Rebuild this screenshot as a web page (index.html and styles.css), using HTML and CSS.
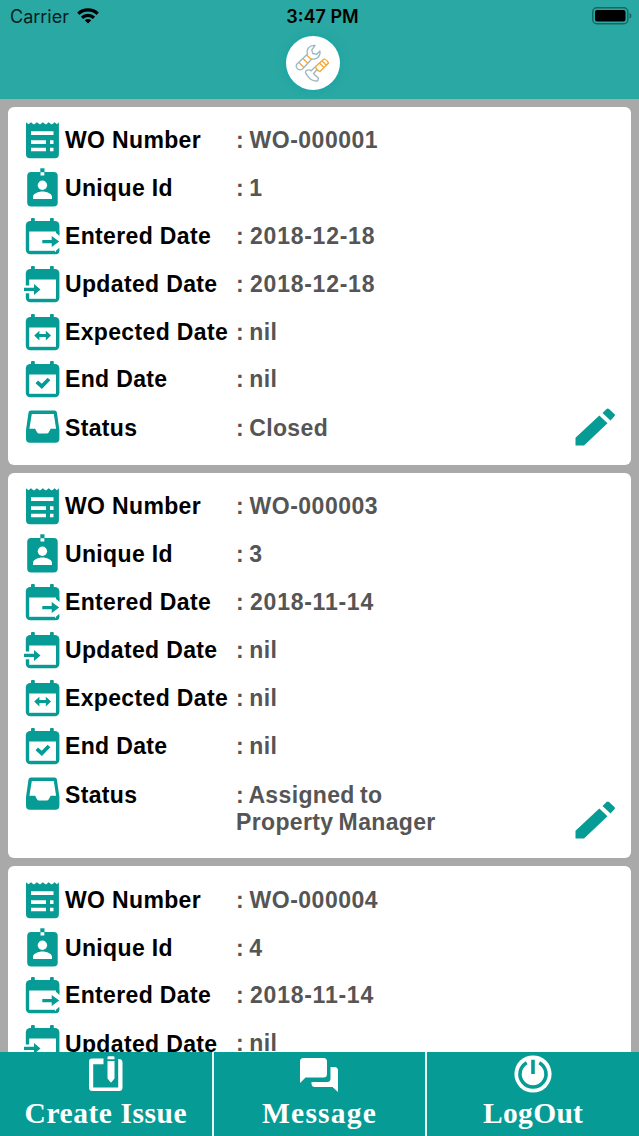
FILE: index.html
```
<!DOCTYPE html>
<html lang="en">
<head>
  <meta charset="UTF-8" />
  <meta name="viewport" content="width=device-width, initial-scale=1.0"/>
  <title>Work Orders</title>
  <link rel="stylesheet" href="styles.css">
</head>
<body>

<svg class="sprite">
  <symbol id="receipt" viewBox="0 0 36 40">
    <path d="M2 2.3l2.500 2L7 2.300l2.400 2h1l2.500-2 2.500 2h1l2.400-2 2.500 2h1l2.400-2 2.500 2h1l2.500-2 2.200 2 2-2v32q0 4-4 4H6q-4 0-4-4z"/>
    <path class="cut" d="M7 11.300h22.500V15H7zM7 20.300h15V24H7zM26 20.300h3.500V24H26zM7 27.800h15v3.500H7zM26 27.800h3.500v3.500H26z"/>
  </symbol>
  <symbol id="badge" viewBox="0 0 36 40">
    <rect x="3.2" y="4" width="30.5" height="34.5" rx="4"/>
    <path d="M16.300.3h4.200v4h-4.200z"/>
    <path class="cut" d="M16.500 4.200h3.800v3.400h-3.800zM9 31v-2.200c0-3.200 5.500-5.300 9.500-5.300s9.500 2.100 9.500 5.300V31z"/>
    <circle class="cut" cx="18.4" cy="17.3" r="4.7"/>
  </symbol>
  <symbol id="calendar" viewBox="0 0 36 40">
    <rect x="7" y="2" width="3.8" height="8" rx="1"/>
    <rect x="26" y="2" width="3.8" height="8" rx="1"/>
    <rect x="1.8" y="5" width="33.6" height="33.3" rx="4.5"/>
    <path class="cut" d="M5.200 15.500H32v19.300H5.200z"/>
  </symbol>
  <symbol id="entered" viewBox="0 0 36 40">
    <use href="#calendar"/>
    <path class="cut" d="M31 22l-2-5 2-1 5 4.500v13L31 36z"/>
    <path d="M32 15h3.300v3.300L32 15.500zM32 34.800l3.300-3v3q0 3.400-3.300 3.400zM18.300 23.900h9.400V20l7.500 5.500-7.500 5.600v-3.900h-9.400z"/>
  </symbol>
  <symbol id="updated" viewBox="0 0 36 40">
    <use href="#calendar"/>
    <path class="cut" d="M0 21.500h6v7.800H0z"/>
    <path d="M0 23.700h10V20l6.500 5.400L10 31v-3.900H0z"/>
  </symbol>
  <symbol id="expected" viewBox="0 0 36 40">
    <use href="#calendar"/>
    <path d="M10.200 23.500l5.200-4.800V22h6.400v-3.300l5.200 4.800-5.200 4.900V25h-6.400v3.400z"/>
  </symbol>
  <symbol id="ended" viewBox="0 0 36 40">
    <use href="#calendar"/>
    <path class="check" d="M12.800 22.800l5 4.500 7.200-7.300"/>
  </symbol>
  <symbol id="inbox" viewBox="0 0 36 40">
    <path d="M7 3.400h23.500q2.200 0 2.400 2l2.500 17.600v8.700q0 4-4 4H6q-4 0-4-4V23L4.500 5.400q.3-2 2.500-2z"/>
    <path class="cut" d="M7.800 7h22l2.300 14.700h-5.500q-1 2.200-2 3.800-.5 1-1.700 1h-8q-1.200 0-1.700-1-1-1.600-2-3.800H5.400z"/>
  </symbol>
  <symbol id="pencil" viewBox="0 0 40 38">
    <path d="M.5 29.700L24.300 7.400l8.200 7.800L9 37.400H.5zM27.500 4.900L31.600 1q1.200-1 2.400 0l5.400 5q1 1.200 0 2.300L35.500 12.500z"/>
  </symbol>
</svg>

<header class="header">
  <div class="status-bar">
    <div class="carrier">
      Carrier
      <svg class="wifi" viewBox="0 0 22 16">
        <path d="M1.300 5.700a14.300 14.300 0 0 1 19.400 0M5 9.700a9 9 0 0 1 12 0"/>
        <path class="wifi-dot" d="M7.700 12.200q3.300-2.500 6.600 0L11 15.500z"/>
      </svg>
    </div>
    <div class="time">3:47 PM</div>
    <svg class="battery" viewBox="0 0 40 18">
      <rect class="battery-shell" x=".8" y=".8" width="35" height="16" rx="4"/>
      <rect x="3" y="3" width="30.5" height="11.5" rx="2"/>
      <path class="battery-cap" d="M37.500 6q2 .8 2 2.800t-2 2.800z"/>
    </svg>
  </div>
  <div class="logo">
    <svg viewBox="0 0 54 54">
      <g class="steel">
        <path d="M11 28L21.500 18c-1.500-4.500 1.500-9 7.500-8.500l-3.200 4.300.9 3.700 4 .8 3.200-3.300c1 5-3 9-8.200 8L16.500 33c-3.500 2.500-8-1.500-5.500-5z"/>
        <path d="M31.500 33l-4 4.500c1.500 1.800 3 3 5 4.500l-1 3c-4.500 0-7-1-9.200-4.200L19.500 37l.5-2.500c2.500-.8 4.500-.5 5 .5l4-4"/>
      </g>
      <path class="orange" d="M13 26.500l5 5M17 22.500l5 5M20.500 19l5 4.500M29.500 30.500l8.500-7.500q3.500 1 4.500 4L34 35.500q-3.500-1-4.500-5zM33.500 27l4.500 4.500M36 24.800l4.300 4.500"/>
    </svg>
  </div>
</header>

<main class="orders">
  <section class="card">
    <div class="fields">
      <div class="row"><svg class="icon"><use href="#receipt"/></svg><span class="label">WO Number</span><span class="value code">: WO-000001</span></div>
      <div class="row"><svg class="icon"><use href="#badge"/></svg><span class="label">Unique Id</span><span class="value">: 1</span></div>
      <div class="row"><svg class="icon"><use href="#entered"/></svg><span class="label">Entered Date</span><span class="value date">: 2018-12-18</span></div>
      <div class="row"><svg class="icon"><use href="#updated"/></svg><span class="label">Updated Date</span><span class="value date">: 2018-12-18</span></div>
      <div class="row"><svg class="icon"><use href="#expected"/></svg><span class="label">Expected Date</span><span class="value">: nil</span></div>
      <div class="row"><svg class="icon"><use href="#ended"/></svg><span class="label">End Date</span><span class="value">: nil</span></div>
      <div class="row"><svg class="icon"><use href="#inbox"/></svg><span class="label">Status</span><span class="value status">: Closed</span></div>
    </div>
    <svg class="edit"><use href="#pencil"/></svg>
  </section>

  <section class="card">
    <div class="fields">
      <div class="row"><svg class="icon"><use href="#receipt"/></svg><span class="label">WO Number</span><span class="value code">: WO-000003</span></div>
      <div class="row"><svg class="icon"><use href="#badge"/></svg><span class="label">Unique Id</span><span class="value">: 3</span></div>
      <div class="row"><svg class="icon"><use href="#entered"/></svg><span class="label">Entered Date</span><span class="value date">: 2018-11-14</span></div>
      <div class="row"><svg class="icon"><use href="#updated"/></svg><span class="label">Updated Date</span><span class="value">: nil</span></div>
      <div class="row"><svg class="icon"><use href="#expected"/></svg><span class="label">Expected Date</span><span class="value">: nil</span></div>
      <div class="row"><svg class="icon"><use href="#ended"/></svg><span class="label">End Date</span><span class="value">: nil</span></div>
      <div class="row"><svg class="icon"><use href="#inbox"/></svg><span class="label">Status</span><span class="value status">: Assigned to<br>Property&nbsp;Manager</span></div>
    </div>
    <svg class="edit"><use href="#pencil"/></svg>
  </section>

  <section class="card">
    <div class="fields">
      <div class="row"><svg class="icon"><use href="#receipt"/></svg><span class="label">WO Number</span><span class="value code">: WO-000004</span></div>
      <div class="row"><svg class="icon"><use href="#badge"/></svg><span class="label">Unique Id</span><span class="value">: 4</span></div>
      <div class="row"><svg class="icon"><use href="#entered"/></svg><span class="label">Entered Date</span><span class="value date">: 2018-11-14</span></div>
      <div class="row"><svg class="icon"><use href="#updated"/></svg><span class="label">Updated Date</span><span class="value">: nil</span></div>
    </div>
  </section>
</main>

<nav class="tabs">
  <a class="tab">
    <svg class="tab-icon" viewBox="0 0 38 38">
      <path d="M5 3.500h11.500v5.700H6.200v23.300h25V4H32q3.500 0 3.500 3.500v25Q35.500 36 32 36H5.500Q2 36 2 32.500v-26q0-3 3-3z"/>
      <path d="M21.500 1.300h5q1 0 1 1v2h-7v-2q0-1 1-1zM20.500 6h7v17.500L24 27.700l-3.500-4.200z"/>
    </svg>
    <span class="create">Create Issue</span>
  </a>
  <a class="tab">
    <svg class="tab-icon message-icon" viewBox="0 0 38 38">
      <path d="M3.500 3h20Q27 3 27 6.500V19q0 3.500-3.500 3.500h-18L0 28V6.500Q0 3 3.500 3z"/>
      <path d="M30.500 12h4q3.500 0 3.500 3.500V37l-5.500-5H15q-3.500 0-3.500-3.500V27H27q3.500 0 3.500-3.500z"/>
    </svg>
    <span class="message">Message</span>
  </a>
  <a class="tab">
    <svg class="tab-icon" viewBox="0 0 38 38">
      <circle cx="19" cy="19" r="18.6"/>
      <path class="power" d="M12.700 7.700a13 13 0 1 0 12.600 0M19 4.800V19"/>
    </svg>
    <span class="logout">LogOut</span>
  </a>
</nav>

</body>
</html>
```
FILE: styles.css
```
* {
  box-sizing: border-box;
}
body {
  display: flex;
  flex-direction: column;
  height: 1136px;
  margin: 0;
  overflow: hidden;
  background: #a9a9a9;
  font-family: 'Liberation Sans', Arial, sans-serif;
}
svg {
  display: block;
}
.sprite {
  display: none;
}
.header {
  flex: none;
  height: 99px;
  background: #2aa8a3;
}
.status-bar {
  display: grid;
  grid-template-columns: 1fr auto 1fr;
  align-items: center;
  height: 32px;
  padding: 0 7px 0 10px;
  font-family: Inter, sans-serif;
  font-size: 18px;
  color: #06201f;
}
.carrier {
  display: flex;
  gap: 8px;
}
.wifi {
  width: 22px;
  height: 16px;
  margin-top: 2px;
  fill: none;
  stroke: #000;
  stroke-width: 3.2;
}
.wifi-dot {
  fill: #000;
  stroke: none;
}
.time {
  padding-left: 3px;
  font-weight: 600;
  color: #000;
}
.battery {
  justify-self: end;
  width: 40px;
  height: 18px;
}
.battery-shell {
  fill: none;
  stroke: #176661;
  stroke-width: 1.4;
}
.battery-cap {
  fill: #176661;
}
.logo {
  width: 54px;
  height: 54px;
  margin: 4px auto 0 286px;
  border-radius: 50%;
  background: #fff;
  box-shadow: 0 0 8px rgba(0, 160, 170, 0.6);
}
.logo svg {
  fill: none;
  stroke-width: 1.3;
  stroke-linejoin: round;
}
.steel {
  stroke: #9bb7c1;
}
.orange {
  stroke: #f9a62b;
}
.orders {
  flex: 1;
  min-height: 0;
  overflow: hidden;
  padding: 7.5px 8px 0;
}
.card {
  display: flex;
  justify-content: space-between;
  margin-bottom: 8px;
  padding: 9.5px 16px 13.5px;
  border-radius: 6px;
  background: #fff;
}
.row {
  display: flex;
  align-items: flex-start;
  min-height: 47.9px;
  font-size: 23px;
  font-weight: bold;
  line-height: 27px;
}
.icon {
  flex: none;
  width: 36px;
  height: 40px;
  margin: 4px 5px 0 0;
  fill: #069b95;
}
.cut {
  fill: #fff;
}
.check {
  fill: none;
  stroke: #069b95;
  stroke-width: 3.8;
}
.label {
  width: 171px;
  margin-top: 11px;
  color: #000;
  letter-spacing: 0.35px;
}
.value {
  width: 210px;
  margin-top: 11px;
  color: #555;
  letter-spacing: 0.35px;
  word-spacing: -1.5px;
}
.row:last-child .label {
  margin-top: 12px;
}
.status {
  margin-top: 12px;
  padding-bottom: 9px;
}
.code {
  letter-spacing: 0.5px;
}
.date {
  letter-spacing: 0.75px;
}
.edit {
  align-self: flex-end;
  width: 40px;
  height: 38px;
  margin-bottom: 5.5px;
  fill: #069b95;
}
.tabs {
  display: flex;
  flex: none;
  height: 84px;
  background: #069b95;
}
.tab {
  display: flex;
  flex: 1;
  flex-direction: column;
  align-items: center;
  padding-top: 3px;
  color: #fff;
  font-family: 'Liberation Serif', serif;
  font-size: 29.5px;
  font-weight: bold;
  line-height: 32px;
}
.tab + .tab {
  border-left: 2px solid #e3f5f4;
}
.tab-icon {
  width: 38px;
  height: 38px;
  margin-bottom: 4px;
  fill: #fff;
}
.message-icon {
  margin-right: 2px;
}
.power {
  fill: none;
  stroke: #069b95;
  stroke-width: 3.6;
}
.create {
  letter-spacing: 0.55px;
}
.message {
  letter-spacing: 1.2px;
}
.logout {
  letter-spacing: 0.3px;
}
```
